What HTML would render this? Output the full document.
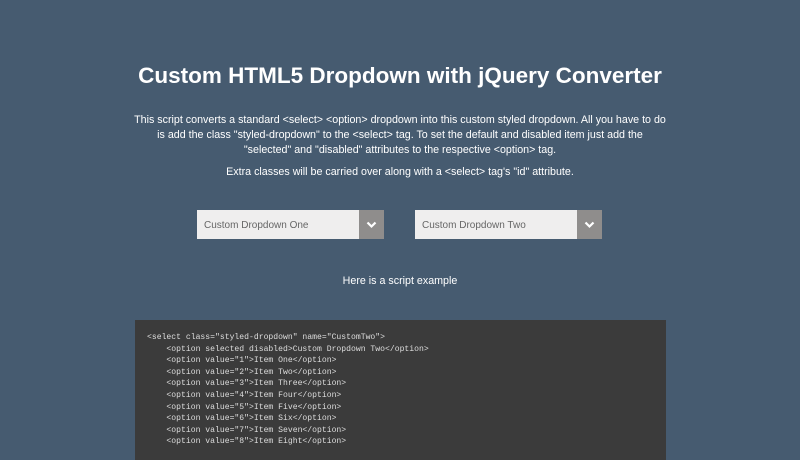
<!DOCTYPE html>
<html><head><style>
body{margin:0;width:800px;height:450px;overflow:hidden;background:#465b70;font-family:"Liberation Sans",sans-serif;color:#fff;position:relative}
h1{position:absolute;top:61px;left:0;width:800px;margin:0;text-align:center;font-size:22.5px;font-weight:bold;line-height:30px}
.p{position:absolute;left:133px;width:534px;text-align:center;font-size:10.7px;line-height:15px}
.dd{position:absolute;top:210px;width:187px;height:29px;background:#efeeee;color:#666;font-size:10px;line-height:31px;box-sizing:border-box;padding-left:7px}
.dd .a{position:absolute;right:0;top:0;width:25px;height:29px;background:#8f8d8c}
pre{position:absolute;left:135px;top:320px;width:531px;height:140px;margin:0;background:#3b3b3b;color:#ddd;font-family:"Liberation Mono",monospace;font-size:8.1px;line-height:11.6px;padding:12px 12px;box-sizing:border-box}
</style></head><body>
<h1>Custom HTML5 Dropdown with jQuery Converter</h1>
<div class="p" style="top:113px">This script converts a standard &lt;select&gt; &lt;option&gt; dropdown into this custom styled dropdown. All you have to do is add the class "styled-dropdown" to the &lt;select&gt; tag. To set the default and disabled item just add the "selected" and "disabled" attributes to the respective &lt;option&gt; tag.</div>
<div class="p" style="top:165px">Extra classes will be carried over along with a &lt;select&gt; tag's "id" attribute.</div>
<div class="dd" style="left:197px">Custom Dropdown One<div class="a"><svg width="25" height="29"><path d="M8.5 12.5l4 4 4-4" stroke="#fff" stroke-width="2.2" fill="none"/></svg></div></div>
<div class="dd" style="left:415px">Custom Dropdown Two<div class="a"><svg width="25" height="29"><path d="M8.5 12.5l4 4 4-4" stroke="#fff" stroke-width="2.2" fill="none"/></svg></div></div>
<div class="p" style="top:274px">Here is a script example</div>
<pre>&lt;select class="styled-dropdown" name="CustomTwo"&gt;
    &lt;option selected disabled&gt;Custom Dropdown Two&lt;/option&gt;
    &lt;option value="1"&gt;Item One&lt;/option&gt;
    &lt;option value="2"&gt;Item Two&lt;/option&gt;
    &lt;option value="3"&gt;Item Three&lt;/option&gt;
    &lt;option value="4"&gt;Item Four&lt;/option&gt;
    &lt;option value="5"&gt;Item Five&lt;/option&gt;
    &lt;option value="6"&gt;Item Six&lt;/option&gt;
    &lt;option value="7"&gt;Item Seven&lt;/option&gt;
    &lt;option value="8"&gt;Item Eight&lt;/option&gt;</pre>
</body></html>
